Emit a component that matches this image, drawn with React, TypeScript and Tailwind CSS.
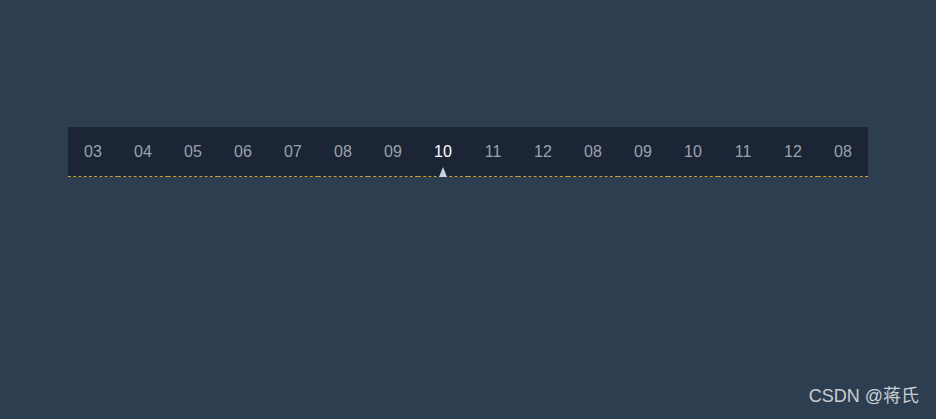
import React from 'react'

const days = ['03', '04', '05', '06', '07', '08', '09', '10', '11', '12', '08', '09', '10', '11', '12', '08']
const activeIndex = 7

export default function App() {
  return (
    <div className="relative w-full h-[419px] bg-[#2d3e50] font-['Liberation_Sans','Noto_Sans_CJK_SC',sans-serif]">
      <div className="pt-[127px] pl-[68px]">
        <ul className="flex w-[800px] h-[50px] bg-[#1b2535]">
          {days.map((d, i) => (
            <li
              key={i}
              className={
                'relative flex w-[50px] items-center justify-center text-[16px] border-b border-dashed border-[#c99f2e] ' +
                (i === activeIndex ? 'text-white' : 'text-[#9aa3ad]')
              }
            >
              {d}
              {i === activeIndex && (
                <span className="absolute -bottom-px left-1/2 -translate-x-1/2 w-0 h-0 border-l-[4px] border-r-[4px] border-b-[10px] border-l-transparent border-r-transparent border-b-[#c7d3e0]" />
              )}
            </li>
          ))}
        </ul>
      </div>
      <span className="absolute right-[17px] bottom-[9px] text-[18px] text-[#c9ced4]">
        CSDN @蒋氏
      </span>
    </div>
  )
}
